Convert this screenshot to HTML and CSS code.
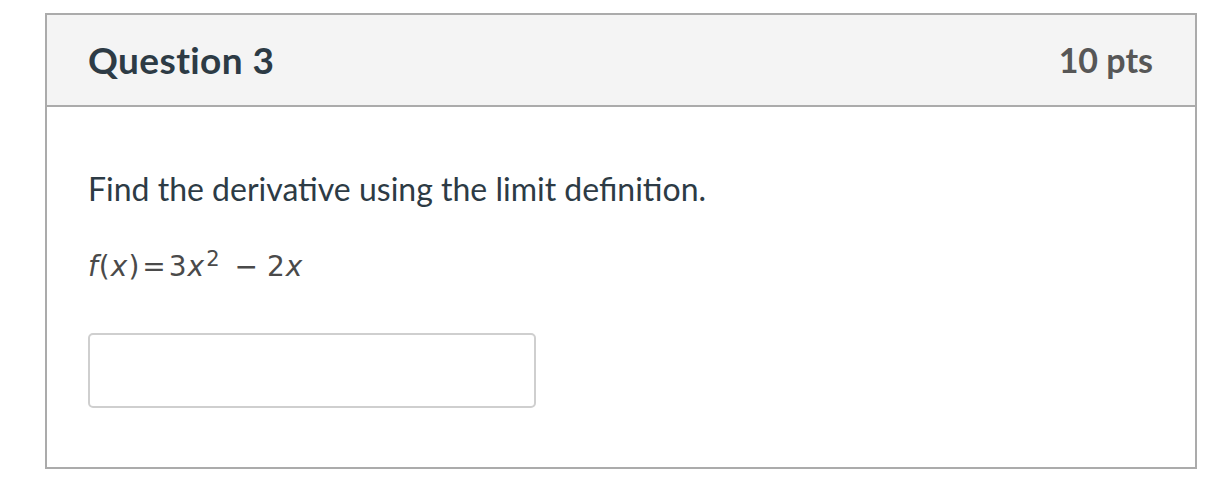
FILE: index.html
```html
<!DOCTYPE html>
<html lang="en">
<head>
<meta charset="utf-8">
<title>Question 3</title>
<link rel="stylesheet" href="styles.css">
</head>
<body>
<div class="question">
  <div class="q-header">
    <h2 class="q-title">Question 3</h2>
    <span class="q-points">10 pts</span>
  </div>
  <div class="q-body">
    <p class="q-text">Find the derivative using the limit definition.</p>
    <p class="q-formula"><span class="fi">f</span>(<span class="vi">x</span>)<span class="eq">=</span>3<span class="vi">x</span><sup>2</sup><span class="minus">−</span>2<span class="vi">x</span></p>
    <input class="q-input" type="text" aria-label="Answer">
  </div>
</div>
</body>
</html>
```
FILE: styles.css
```css
html, body {
  margin: 0;
  padding: 0;
  background: #ffffff;
}
body {
  font-family: Lato, "Open Sans", sans-serif;
  color: #2d3b45;
}
.question {
  margin: 13px 0 0 45px;
  width: 1148px;
  border: 2px solid #ababab;
}
.q-header {
  display: flex;
  align-items: center;
  justify-content: space-between;
  height: 90px;
  padding: 0 42px 0 41px;
  background: #f4f4f4;
  border-bottom: 2px solid #ababab;
}
.q-title {
  margin: 0;
  font-size: 37px;
  letter-spacing: 0.4px;
  font-weight: 700;
  color: #2d3b45;
  line-height: 40px;
}
.q-points {
  font-size: 34px;
  font-weight: 700;
  color: #575757;
  line-height: 40px;
}
.q-body {
  padding: 62px 41px 59px;
}
.q-text {
  margin: 0;
  font-size: 32px;
  line-height: 40px;
}
.q-formula {
  margin: 38px 0 0;
  font-family: "DejaVu Sans", Verdana, sans-serif;
  font-size: 28px;
  letter-spacing: 1px;
  color: #4a4a4a;
  line-height: 40px;
  height: 40px;
}
.q-formula .fi,
.q-formula .vi {
  font-style: italic;
}
.q-formula .eq {
  margin: 0 2px;
}
.q-formula .minus {
  margin: 0 8px 0 0;
}
.q-formula sup {
  font-size: 21px;
  line-height: 0;
  margin-left: 1px;
  margin-right: 14px;
}
.q-input {
  display: block;
  margin-top: 46px;
  width: 448px;
  height: 75px;
  box-sizing: border-box;
  border: 2px solid #cfcfcf;
  border-radius: 5px;
  background: #fff;
}
```
